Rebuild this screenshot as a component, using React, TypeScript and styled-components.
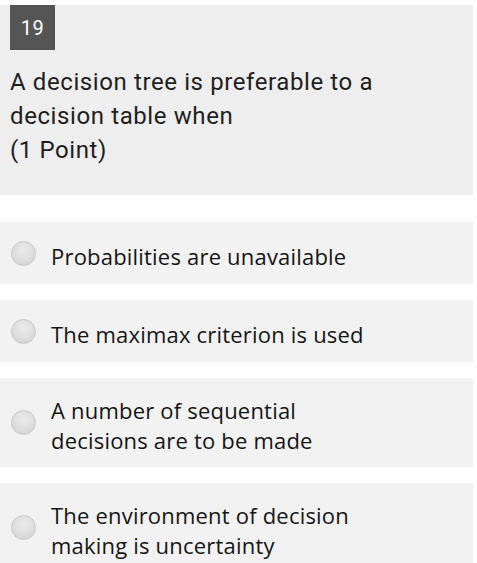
import React from "react";
import styled, { createGlobalStyle } from "styled-components";

const Global = createGlobalStyle`
  html, body { margin: 0; padding: 0; background: #ffffff; }
  body { width: 477px; overflow: hidden; }
`;

const Page = styled.div`
  display: flex;
  flex-direction: column;
  padding: 5px 4px 0 0;
`;

const QuestionCard = styled.section`
  background: #eeeeee;
  padding: 0 10px 28px;
  display: flex;
  flex-direction: column;
  align-items: flex-start;
`;

const Badge = styled.div`
  width: 45px;
  height: 45px;
  background: #555555;
  color: #ffffff;
  font-family: Roboto, "Liberation Sans", sans-serif;
  font-size: 20px;
  letter-spacing: 0.5px;
  display: flex;
  align-items: center;
  justify-content: center;
`;

const QuestionText = styled.div`
  margin-top: 15px;
  font-family: Roboto, "Liberation Sans", sans-serif;
  font-size: 24px;
  letter-spacing: 0.6px;
  line-height: 34px;
  color: #1e1e1e;
`;

const Options = styled.div`
  margin-top: 27px;
  display: flex;
  flex-direction: column;
  gap: 16px;
`;

const OptionCard = styled.label<{ $lines: number }>`
  background: #f2f2f2;
  display: flex;
  align-items: center;
  gap: 15px;
  padding: ${(p) => (p.$lines > 1 ? "12px" : "13.5px")} 11px;
`;

const Radio = styled.span`
  flex: none;
  width: 25px;
  height: 25px;
  border-radius: 50%;
  box-sizing: border-box;
  border: 1px solid #c9c9c9;
  background: radial-gradient(circle at 50% 35%, #ececec 0%, #dcdcdc 60%, #cfcfcf 100%);
`;

const OptionText = styled.span`
  padding-top: 5px;
  font-family: "Open Sans", "Noto Sans", sans-serif;
  font-size: 22px;
  letter-spacing: 0.2px;
  line-height: 30px;
  color: #151515;
`;

const options = [
  { text: ["Probabilities are unavailable"] },
  { text: ["The maximax criterion is used"] },
  { text: ["A number of sequential", "decisions are to be made"] },
  { text: ["The environment of decision", "making is uncertainty"] },
];

export default function App() {
  return (
    <>
      <Global />
      <Page>
        <QuestionCard>
          <Badge>19</Badge>
          <QuestionText>
            A decision tree is preferable to a
            <br />
            decision table when
            <br />
            (1 Point)
          </QuestionText>
        </QuestionCard>
        <Options>
          {options.map((o, i) => (
            <OptionCard key={i} $lines={o.text.length}>
              <Radio />
              <OptionText>
                {o.text.map((t, j) => (
                  <React.Fragment key={j}>
                    {j > 0 && <br />}
                    {t}
                  </React.Fragment>
                ))}
              </OptionText>
            </OptionCard>
          ))}
        </Options>
      </Page>
    </>
  );
}
